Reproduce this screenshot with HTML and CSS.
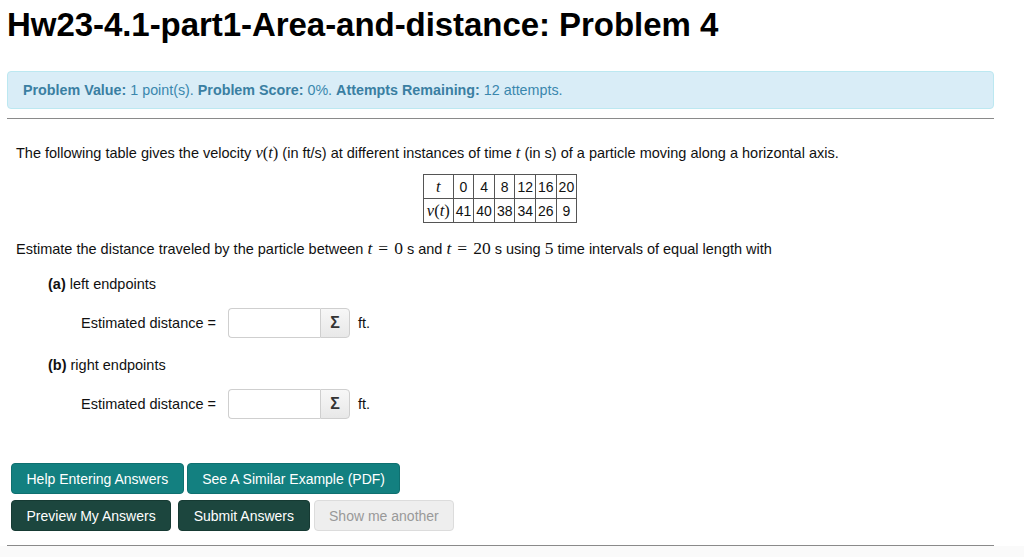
FILE: index.html
```html
<!DOCTYPE html>
<html>
<head>
<meta charset="utf-8">
<link rel="stylesheet" href="styles.css">
</head>
<body>
<div class="page">
  <h1 class="title">Hw23-4.1-part1-Area-and-distance: Problem 4</h1>
  <div class="alert">
    <span><b>Problem Value:</b> 1 point(s). <b>Problem Score:</b> 0%. <b>Attempts Remaining:</b> 12 attempts.</span>
  </div>
  <hr class="rule">
  <div class="problem">
    <p class="para">The following table gives the velocity <span class="math">v</span><span class="mrm">(</span><span class="math">t</span><span class="mrm">)</span> (in ft/s) at different instances of time <span class="math">t</span> (in s) of a particle moving along a horizontal axis.</p>
    <div class="table-wrap">
      <table class="data">
        <tr><td class="hd"><span class="math">t</span></td><td>0</td><td>4</td><td>8</td><td>12</td><td>16</td><td>20</td></tr>
        <tr><td class="hd"><span class="math">v</span><span class="mrm">(</span><span class="math">t</span><span class="mrm">)</span></td><td>41</td><td>40</td><td>38</td><td>34</td><td>26</td><td>9</td></tr>
      </table>
    </div>
    <p class="para est">Estimate the distance traveled by the particle between <span class="math">t</span><span class="mrm rel">=</span><span class="mrm">0</span> s and <span class="math">t</span><span class="mrm rel">=</span><span class="mrm">20</span> s using <span class="mrm">5</span> time intervals of equal length with</p>
    <p class="part"><b>(a)</b> left endpoints</p>
    <div class="answer-row">
      <span class="label">Estimated distance =</span>
      <span class="input-group"><span class="field"></span><span class="addon">&Sigma;</span></span>
      <span class="unit">ft.</span>
    </div>
    <p class="part"><b>(b)</b> right endpoints</p>
    <div class="answer-row">
      <span class="label">Estimated distance =</span>
      <span class="input-group"><span class="field"></span><span class="addon">&Sigma;</span></span>
      <span class="unit">ft.</span>
    </div>
  </div>
  <div class="btn-row first">
    <span class="btn teal">Help Entering Answers</span>
    <span class="btn teal">See A Similar Example (PDF)</span>
  </div>
  <div class="btn-row second">
    <span class="btn dark">Preview My Answers</span>
    <span class="btn dark">Submit Answers</span>
    <span class="btn muted">Show me another</span>
  </div>
  <hr class="rule bottom">
</div>
<div class="footer-bg"></div>
</body>
</html>
```
FILE: styles.css
```css
html, body {
  margin: 0;
  padding: 0;
  background: #ffffff;
}
body {
  font-family: "Liberation Sans", Arial, sans-serif;
  font-size: 14.5px;
  color: #111;
}
.page {
  width: 987px;
  padding-left: 7px;
}
.title {
  margin: 0;
  padding-top: 6px;
  font-size: 33px;
  line-height: 38px;
  font-weight: bold;
  letter-spacing: -0.05px;
  color: #000;
}
.alert {
  margin-top: 27px;
  box-sizing: border-box;
  height: 38px;
  padding: 0 15px;
  display: flex;
  align-items: center;
  background: #d9edf7;
  border: 1px solid #bce8f1;
  border-radius: 4px;
  color: #3a87ad;
  font-size: 14.3px;
}
.alert b { color: #3a7fa2; }
.rule {
  margin: 0;
  border: 0;
  border-top: 1px solid #8a8a8a;
  margin-top: 9px;
}
.problem {
  padding-left: 9px;
}
.para {
  margin: 25px 0 0 0;
  line-height: 17px;
}
.math {
  font-family: "Liberation Serif", "Times New Roman", serif;
  font-style: italic;
  font-size: 16.5px;
}
.mrm {
  font-family: "Liberation Serif", "Times New Roman", serif;
  font-size: 16.5px;
}
.est .math, .est .mrm {
  font-size: 17.5px;
}
.mrm.rel {
  margin: 0 6px;
}
.table-wrap {
  display: flex;
  justify-content: center;
  margin-top: 12px;
  padding-right: 10px;
}
.data {
  border-collapse: collapse;
  border: 1px solid #333;
}
.data td {
  border: 1px solid #555;
  padding: 0 2px;
  height: 24px;
  box-sizing: border-box;
  text-align: center;
  font-size: 14px;
  line-height: 20px;
}
.data td.hd { padding: 0 3px; }
.para.est { margin-top: 17px; }
.part {
  margin: 18px 0 0 32px;
  line-height: 17px;
}
.answer-row {
  display: flex;
  align-items: center;
  margin: 15px 0 0 65px;
  height: 30px;
}
.label { margin-right: 12px; }
.input-group {
  display: flex;
  height: 30px;
}
.field {
  width: 92px;
  height: 30px;
  box-sizing: border-box;
  border: 1px solid #cfcfcf;
  border-right: 0;
  border-radius: 4px 0 0 4px;
  background: #fff;
}
.addon {
  width: 30px;
  height: 30px;
  box-sizing: border-box;
  border: 1px solid #cfcfcf;
  border-radius: 0 4px 4px 0;
  background: linear-gradient(#f7f7f7, #e8e8e8);
  display: flex;
  align-items: center;
  justify-content: center;
  font-weight: bold;
  font-size: 16px;
  color: #333;
}
.unit { margin-left: 8px; }
.answer-row + .part { margin-top: 19px; }
.btn-row {
  display: flex;
  gap: 3px;
  padding-left: 4px;
}
.btn-row.first { margin-top: 44px; }
.btn-row.second { margin-top: 6px; gap: 7px; }
.btn-row.second .btn.muted { margin-left: -3px; }
.btn {
  display: inline-flex;
  align-items: center;
  height: 31px;
  box-sizing: border-box;
  padding: 0 14.5px;
  border-radius: 4px;
  font-size: 14px;
  border: 1px solid transparent;
  white-space: nowrap;
}
.btn.teal {
  background: #138080;
  border-color: #0f7070;
  color: #fff;
}
.btn.dark {
  background: #1c463e;
  border-color: #163a33;
  color: #fff;
}
.btn.muted {
  background: #eeeeee;
  border-color: #dcdcdc;
  color: #999;
}
.rule.bottom {
  margin-top: 14px;
  border-top-color: #8a8a8a;
}
.footer-bg {
  height: 12px;
  background: #fafafa;
}
```
